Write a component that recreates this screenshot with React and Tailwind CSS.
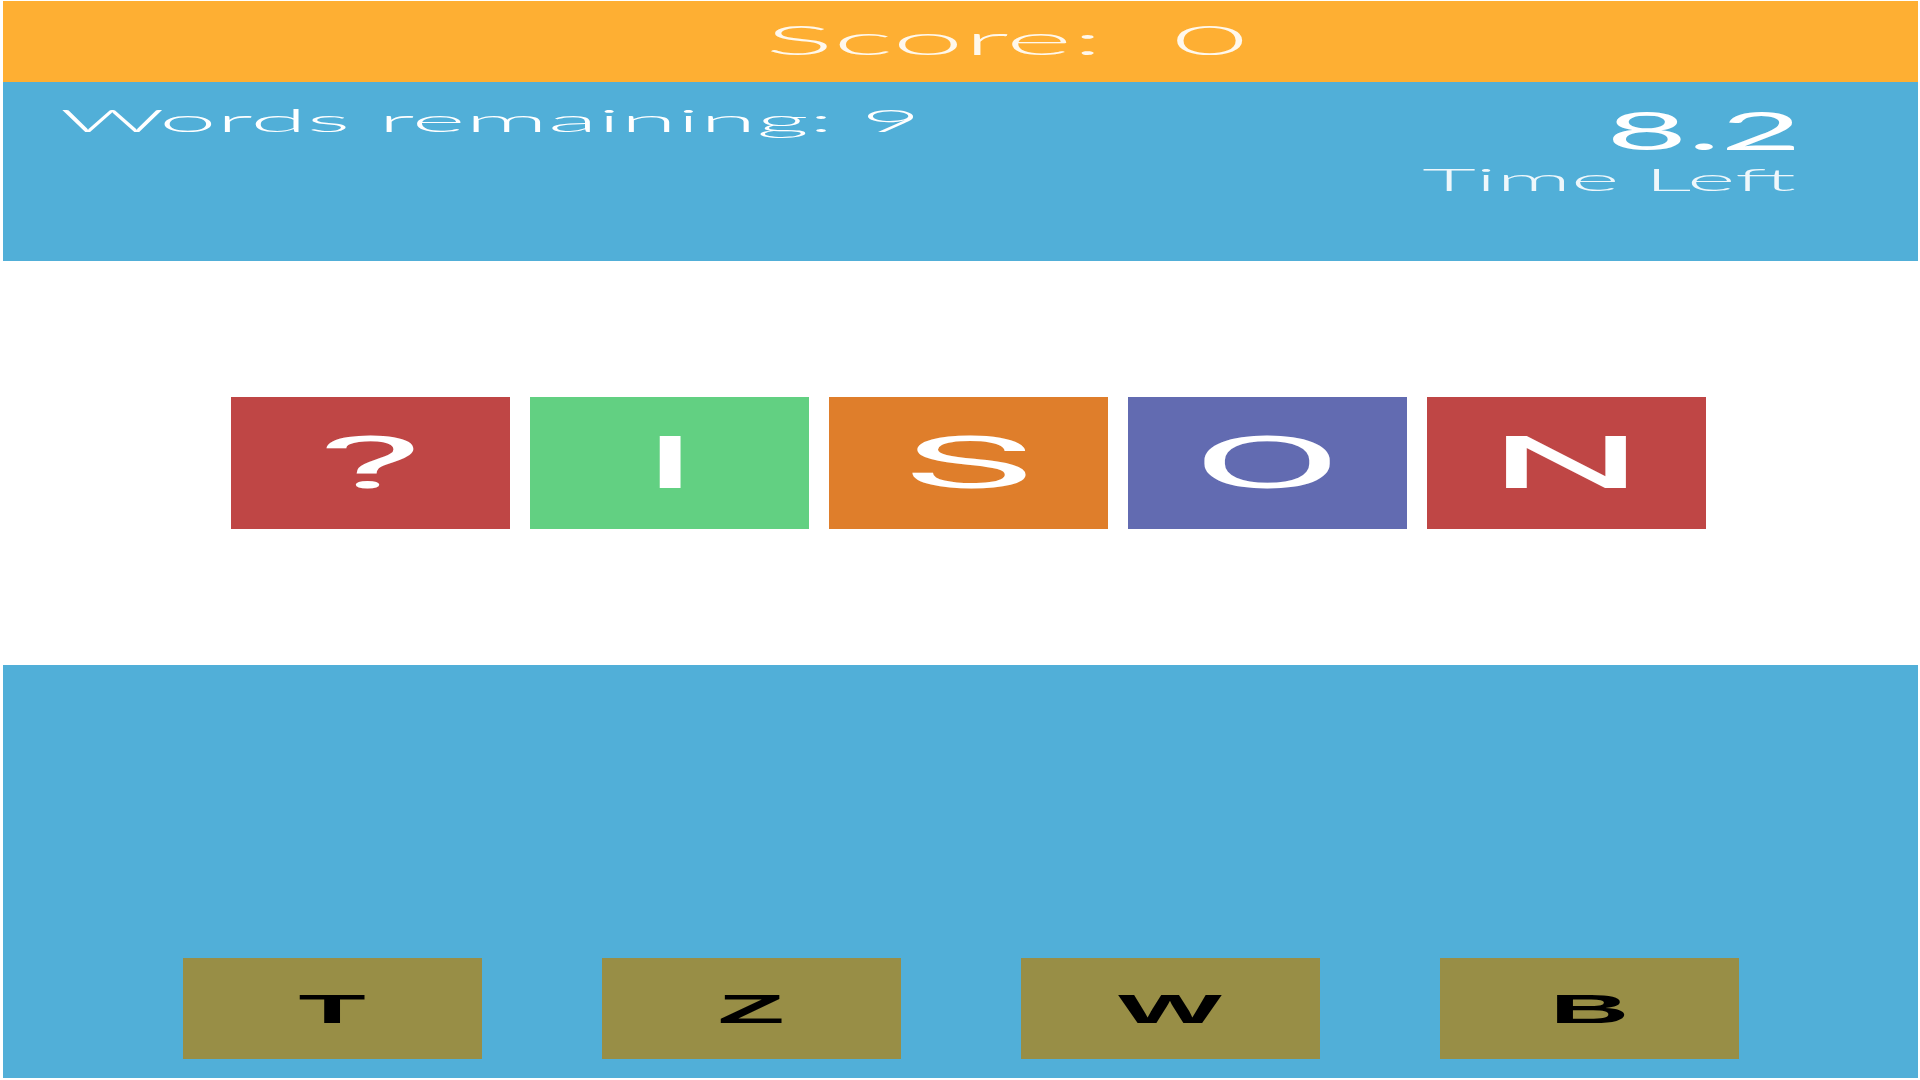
import React from 'react'

const tiles = [
  { id: 'q', letter: '?', color: 'bg-[#bf4645]' },
  { id: 'i', letter: 'I', color: 'bg-[#62d082]' },
  { id: 's', letter: 'S', color: 'bg-[#df7e2b]' },
  { id: 'o', letter: 'O', color: 'bg-[#626bb1]' },
  { id: 'n', letter: 'N', color: 'bg-[#bf4645]' }
]

const choices = ['T', 'Z', 'W', 'B']

const App = () => {
  return (
    <div className="w-[1920px] h-[1080px] bg-white pt-[1px] pl-[3px] pr-[2px] pb-[2px] flex flex-col overflow-hidden">
      {/* Score bar */}
      <div className="h-[81px] bg-[#feaf33] flex justify-center pt-[17px] pl-[90px]">
        <span className="inline-block scale-x-[3.05] font-['Lato',sans-serif] font-light text-[42px] leading-none text-[#fff8ec] whitespace-pre">
          Score:  0
        </span>
      </div>

      {/* Status */}
      <div className="h-[179px] bg-[#51afd8] flex justify-between pl-[57px] pr-[122px]">
        <div className="pt-[22px]">
          <span className="inline-block origin-left scale-x-[3.21] font-['Lato',sans-serif] font-light text-[32px] leading-none text-white whitespace-pre">
            Words remaining: 9
          </span>
        </div>
        <div className="pt-[22px] flex flex-col items-end">
          <span className="-mr-[6px] inline-block origin-right scale-x-[2.69] font-['Lato',sans-serif] font-normal text-[52px] leading-none text-white">
            8.2
          </span>
          <span className="mt-[8px] inline-block origin-right scale-x-[2.99] font-['Lato',sans-serif] font-light text-[31px] leading-none text-white/90 whitespace-pre">
            Time Left
          </span>
        </div>
      </div>

      {/* Word tiles */}
      <div className="h-[404px] flex items-center justify-center gap-[20px] pl-[16px]">
        {tiles.map(tile => (
          <div key={tile.id} className={`w-[279px] h-[132px] ${tile.color} flex items-center justify-center`}>
            <span className="inline-block scale-x-[3] font-['Roboto',sans-serif] font-normal text-[73px] leading-none text-white">
              {tile.letter}
            </span>
          </div>
        ))}
      </div>

      {/* Letter choices */}
      <div className="flex-1 bg-[#51afd8] flex items-end justify-center gap-[120px] pb-[19px]">
        {choices.map(letter => (
          <button key={letter} className="w-[299px] h-[101px] bg-[#988e46] flex items-center justify-center">
            <span className="inline-block scale-x-[2.75] font-['Liberation_Sans',Arial,sans-serif] font-bold text-[40px] leading-none text-black">
              {letter}
            </span>
          </button>
        ))}
      </div>
    </div>
  )
}

export default App
